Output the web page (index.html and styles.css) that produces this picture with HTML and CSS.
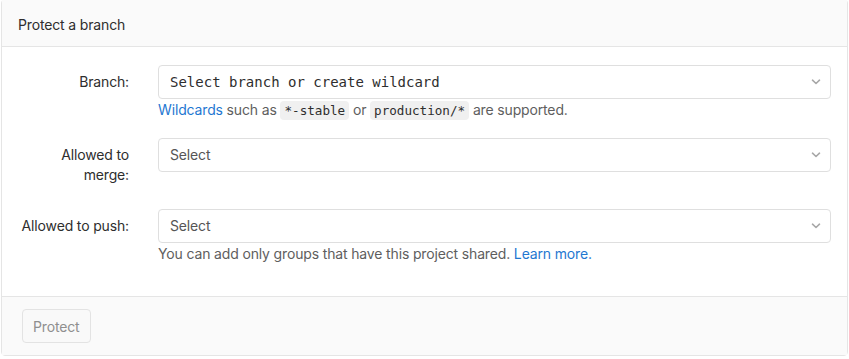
FILE: index.html
```html
<!DOCTYPE html>
<html lang="en">
<head>
    <meta charset="UTF-8">
    <title>Protect a branch</title>
    <link rel="stylesheet" href="styles.css">
</head>
<body>
    <div class="card">
        <div class="card-header">Protect a branch</div>
        <div class="card-body">
            <div class="form-row">
                <label class="form-label">Branch:</label>
                <div class="form-field">
                    <div class="dropdown mono">
                        <span>Select branch or create wildcard</span>
                        <svg class="chevron" width="10" height="6" viewBox="0 0 10 6"><path d="M1.5 1.2 5 4.5 8.5 1.2" fill="none" stroke="#a8a8a8" stroke-width="1.6" stroke-linecap="round" stroke-linejoin="round"/></svg>
                    </div>
                    <p class="help"><a href="#">Wildcards</a> such as <code>*-stable</code> or <code>production/*</code> are supported.</p>
                </div>
            </div>
            <div class="form-row">
                <label class="form-label">Allowed to<br>merge:</label>
                <div class="form-field">
                    <div class="dropdown">
                        <span>Select</span>
                        <svg class="chevron" width="10" height="6" viewBox="0 0 10 6"><path d="M1.5 1.2 5 4.5 8.5 1.2" fill="none" stroke="#a8a8a8" stroke-width="1.6" stroke-linecap="round" stroke-linejoin="round"/></svg>
                    </div>
                </div>
            </div>
            <div class="form-row">
                <label class="form-label">Allowed to push:</label>
                <div class="form-field">
                    <div class="dropdown">
                        <span>Select</span>
                        <svg class="chevron" width="10" height="6" viewBox="0 0 10 6"><path d="M1.5 1.2 5 4.5 8.5 1.2" fill="none" stroke="#a8a8a8" stroke-width="1.6" stroke-linecap="round" stroke-linejoin="round"/></svg>
                    </div>
                    <p class="help">You can add only groups that have this project shared. <a href="#">Learn more.</a></p>
                </div>
            </div>
        </div>
        <div class="card-footer">
            <button class="btn" disabled>Protect</button>
        </div>
    </div>
</body>
</html>
```
FILE: styles.css
```css
body {
    margin: 0;
    padding: 0 1px;
    background-color: #fff;
    font-family: Inter, "Liberation Sans", sans-serif;
    font-size: 14px;
    line-height: 20px;
    letter-spacing: -0.15px;
    color: #2e2e2e;
}
.card {
    margin-top: -1px;
    border: 1px solid #e5e5e5;
    border-radius: 4px;
}
.card-header {
    padding: 15px 16px 11px;
    background-color: #fafafa;
    border-bottom: 1px solid #e5e5e5;
}
.card-body {
    padding: 18px 16px 15px 0;
}
.form-row {
    display: flex;
    gap: 29px;
    margin-bottom: 18px;
}
.form-label {
    width: 127px;
    flex-shrink: 0;
    text-align: right;
    padding: 7px 0 6px;
}
.form-field {
    flex: 1;
}
.dropdown {
    display: flex;
    align-items: center;
    justify-content: space-between;
    height: 32px;
    padding: 0 11px;
    border: 1px solid #dfdfdf;
    border-radius: 4px;
    color: #555;
}
.dropdown.mono {
    font-family: "DejaVu Sans Mono", monospace;
    letter-spacing: 0;
    color: #2e2e2e;
}
.chevron {
    margin-right: -2px;
}
.help {
    margin: 2px 0 0;
    line-height: 18px;
    color: #5e5e5e;
}
a {
    color: #1f78d1;
    text-decoration: none;
}
code {
    font-family: "DejaVu Sans Mono", monospace;
    font-size: 12.6px;
    letter-spacing: 0;
    padding: 2px 4px;
    background-color: #f0f0f0;
    border-radius: 4px;
    color: #2e2e2e;
}
.card-footer {
    padding: 12px 20px 12px;
    background-color: #fafafa;
    border-top: 1px solid #e5e5e5;
}
.btn {
    height: 34px;
    padding: 0 10px;
    font-family: inherit;
    font-size: 14px;
    letter-spacing: -0.15px;
    color: #8f8f8f;
    background-color: #f9f9f9;
    border: 1px solid #e3e3e3;
    border-radius: 4px;
}
```
